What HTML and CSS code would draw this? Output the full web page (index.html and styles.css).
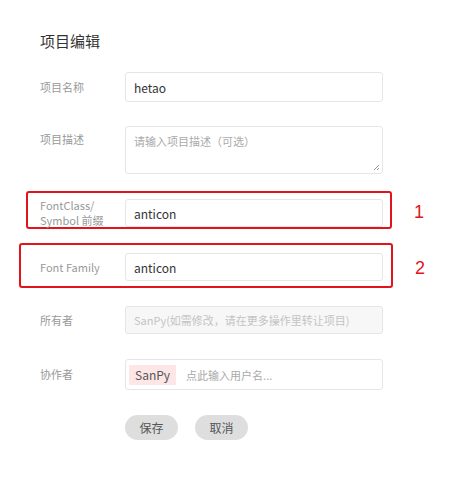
FILE: index.html
```html
<!DOCTYPE html>
<html lang="zh">
<head>
<meta charset="utf-8">
<link rel="stylesheet" href="styles.css">
</head>
<body>
<div class="page">
  <h1 class="title">项目编辑</h1>
  <div class="form">
    <div class="row">
      <div class="label">项目名称</div>
      <div class="field input">hetao</div>
    </div>
    <div class="row row-top">
      <div class="label label-top">项目描述</div>
      <div class="field textarea">
        <span class="placeholder">请输入项目描述（可选）</span>
        <svg class="grip" width="7" height="7" viewBox="0 0 7 7"><path d="M6 1L1 6M6 4L4 6" stroke="#999" stroke-width="1"/></svg>
      </div>
    </div>
    <div class="row row-mark">
      <div class="mark mark1"></div>
      <div class="label">FontClass/<br>Symbol 前缀</div>
      <div class="field input input-28">anticon</div>
      <div class="num num1">1</div>
    </div>
    <div class="row row-mark row-ff">
      <div class="mark mark2"></div>
      <div class="label">Font Family</div>
      <div class="field input input-28">anticon</div>
      <div class="num num2">2</div>
    </div>
    <div class="row row-owner">
      <div class="label">所有者</div>
      <div class="field input disabled">SanPy(如需修改，请在更多操作里转让项目)</div>
    </div>
    <div class="row row-collab">
      <div class="label">协作者</div>
      <div class="field input tags">
        <span class="tag">SanPy</span>
        <span class="placeholder">点此输入用户名...</span>
      </div>
    </div>
    <div class="actions">
      <button class="btn">保存</button>
      <button class="btn">取消</button>
    </div>
  </div>
</div>
</body>
</html>
```
FILE: styles.css
```css
* { box-sizing: border-box; }
body {
  margin: 0;
  background: #fff;
  font-family: "Noto Sans CJK SC", "Noto Sans", sans-serif;
  color: #333;
}
.page {
  padding: 31px 0 0 40px;
}
.title {
  margin: 0;
  font-size: 15px;
  font-weight: 400;
  line-height: 20px;
  color: #333;
}
.form {
  margin-top: 21px;
  display: flex;
  flex-direction: column;
  gap: 24px;
}
.row {
  position: relative;
  display: flex;
  align-items: center;
}
.row-top { align-items: flex-start; }
.row-ff { margin-top: 1px; }
.row-owner { margin-top: 1px; }
.row-collab { margin-top: 1px; }
.label {
  width: 85px;
  font-size: 11px;
  line-height: 15px;
  color: #999;
  position: relative;
}
.label-top { padding-top: 6px; }
.field {
  width: 258px;
  border: 1px solid #e6e6e6;
  border-radius: 3px;
  font-size: 12px;
  color: #333;
  background: #fff;
  position: relative;
}
.input {
  height: 30px;
  padding: 0 8px;
  display: flex;
  align-items: center;
}
.input-28 { height: 28px; }
.textarea {
  height: 48px;
  padding: 5px 8px;
  line-height: 18px;
}
.placeholder {
  color: #aaa;
  font-size: 11px;
}
.grip {
  position: absolute;
  right: 2px;
  bottom: 2px;
}
.disabled {
  background: #f7f7f7;
  color: #c4c4c4;
  font-size: 11px;
  height: 28px;
}
.tags {
  height: 31px;
  padding: 0 3px;
  gap: 10px;
}
.tag {
  background: #fde6e6;
  color: #555;
  font-size: 12px;
  height: 20px;
  line-height: 20px;
  padding: 0 6px;
  border-radius: 1px;
}
.mark {
  position: absolute;
  border: 2px solid #e2141b;
  border-radius: 3px;
}
.mark1 { left: -14px; top: -7px; width: 366px; height: 38px; }
.mark2 { left: -21px; top: -10px; width: 374px; height: 45px; }
.num {
  position: absolute;
  left: 374px;
  font-size: 18px;
  line-height: 20px;
  color: #e2141b;
  font-family: "Liberation Sans", Arial, sans-serif;
}
.num1 { top: 4px; }
.num2 { top: 5px; left: 375px; }
.actions {
  display: flex;
  gap: 17px;
  padding-left: 85px;
  margin-top: 1px;
}
.btn {
  width: 53px;
  height: 25px;
  border: none;
  border-radius: 13px;
  background: #dedede;
  color: #555;
  font-size: 12px;
  font-family: inherit;
  padding: 0;
}
```
